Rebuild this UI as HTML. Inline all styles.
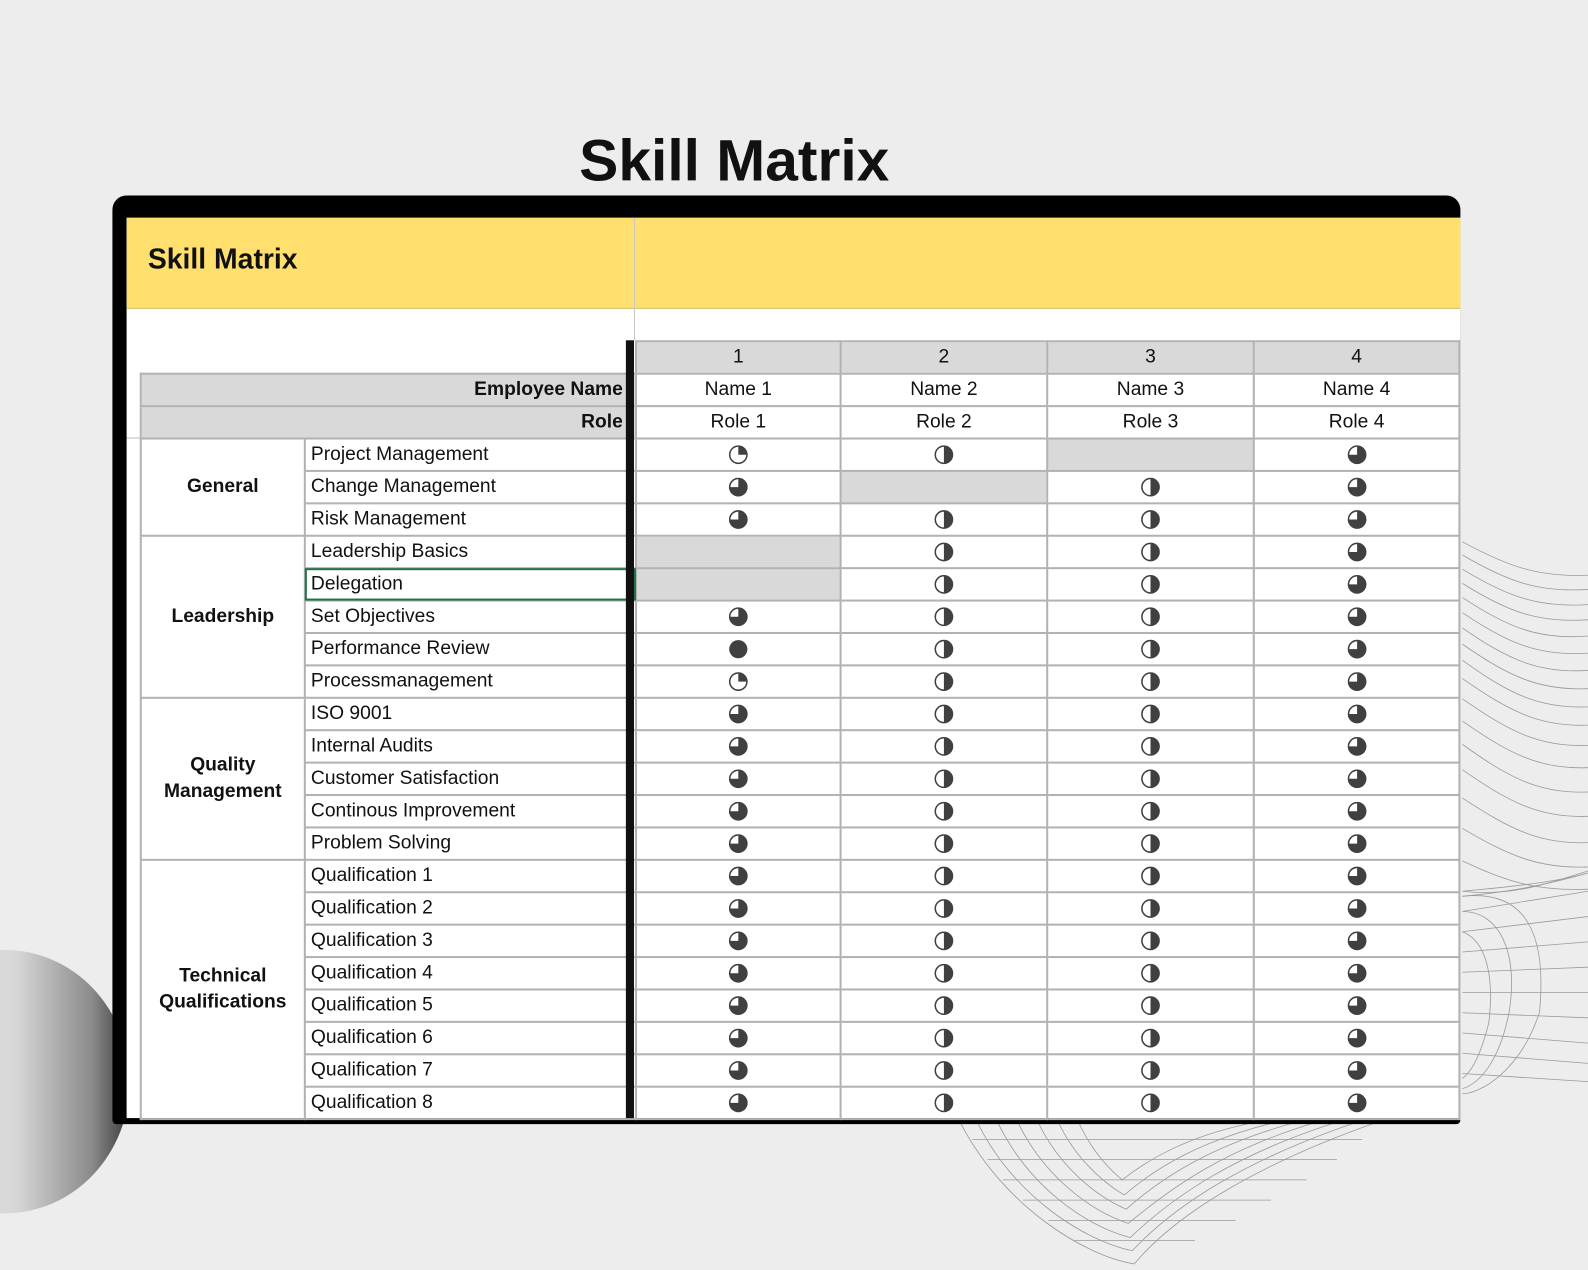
<!DOCTYPE html>
<html><head><meta charset="utf-8">
<style>
html,body{margin:0;padding:0;background:#ededed;overflow:hidden;}
body{width:1588px;height:1270px;position:relative;}
#w{position:absolute;left:0;top:0;width:1568px;height:1254px;transform:scale(1.01276);transform-origin:0 0;font-family:"Liberation Sans",Arial,sans-serif;}
.abs{position:absolute;}
#title{left:0;width:1450px;text-align:center;top:124px;font-size:58px;font-weight:bold;color:#111;line-height:70px;}
#panel{left:111px;top:193px;width:1331px;height:917px;background:#000;border-radius:14px 14px 4px 4px;}
#inner{left:125px;top:215px;width:1317px;height:889px;background:#fff;}
#yellow{left:125px;top:215px;width:1317px;height:89px;background:#ffe06e;border-bottom:1px solid #d8c070;}
#ytxt{left:146px;top:240px;font-size:28px;font-weight:bold;color:#111;}
#vline{left:626px;top:215px;width:1px;height:121px;background:#c8c8c8;}
table{position:absolute;left:138px;top:336px;border-collapse:collapse;table-layout:fixed;}
td{border:2px solid #b2b2b2;height:30px;padding:0;font-size:19px;color:#111;white-space:nowrap;overflow:hidden;text-align:center;vertical-align:middle;}
td.s{text-align:left;padding-left:5px;}
td.c{font-weight:bold;font-size:19px;line-height:26px;}
td.g{background:#d9d9d9;}
td.h{background:#d9d9d9;font-weight:bold;text-align:right;padding-right:12px;}
td.n{border:none;background:transparent;}
td.sel{outline:2px solid #217346;outline-offset:-2px;}
svg.i{display:block;margin:0 auto;}
#bar{left:618px;top:336px;width:8px;height:768px;background:#111;}
#hl{left:125px;top:432px;width:13px;height:1px;background:#bbb;}
</style></head><body><div id="w">
<svg class="abs" style="left:0;top:0" width="1568" height="1254">
<defs><linearGradient id="gr" x1="0" x2="1" y1="0" y2="0"><stop offset="0" stop-color="#ededed"/><stop offset="0.55" stop-color="#d6d6d6"/><stop offset="0.85" stop-color="#8a8a8a"/><stop offset="1" stop-color="#3a3a3a"/></linearGradient></defs>
<ellipse cx="5" cy="1068" rx="123" ry="130" fill="url(#gr)"/>
<g fill="none" stroke="#9a9a9a" stroke-width="0.8">
<path d="M1444 535 C1490 560 1520 570 1568 568"/>
<path d="M1444 548 C1490 575 1520 585 1568 582"/>
<path d="M1444 562 C1490 590 1520 600 1568 597"/>
<path d="M1444 576 C1490 605 1520 615 1568 612"/>
<path d="M1444 590 C1490 620 1520 632 1568 628"/>
<path d="M1444 605 C1490 636 1520 648 1568 645"/>
<path d="M1444 620 C1490 652 1520 665 1568 662"/>
<path d="M1444 636 C1490 668 1520 682 1568 680"/>
<path d="M1444 652 C1490 685 1520 700 1568 698"/>
<path d="M1444 670 C1490 702 1520 718 1568 716"/>
<path d="M1444 690 C1490 722 1520 738 1568 736"/>
<path d="M1444 712 C1490 744 1520 760 1568 758"/>
<path d="M1444 735 C1490 768 1520 784 1568 782"/>
<path d="M1444 760 C1490 792 1520 808 1568 806"/>
<path d="M1444 788 C1490 818 1520 834 1568 832"/>
<path d="M1444 818 C1490 845 1520 858 1568 856"/>
<path d="M1444 850 C1490 872 1520 880 1568 878"/>
<path d="M1444 880 C1490 885 1520 875 1568 860"/>
<path d="M1444 885 C1500 880 1540 870 1568 862"/>
<path d="M1444 880 C1500 875 1540 870 1568 862"/>
<path d="M1444 885 C1490 880 1530 900 1520 1000 1500 1060 1460 1080 1444 1080"/>
<path d="M1444 900 C1480 900 1500 940 1490 1000 1480 1050 1460 1070 1444 1075"/>
<path d="M1444 920 C1470 930 1475 970 1470 1010 1460 1050 1450 1060 1444 1065"/>
<path d="M1444 900 L1568 880 M1444 920 L1568 905 M1444 940 L1568 930 M1444 960 L1568 955 M1444 980 L1568 980 M1444 1000 L1568 1005 M1444 1020 L1568 1030 M1444 1040 L1568 1050 M1444 1060 L1568 1068"/>
<path d="M948 1108 C990 1190 1070 1240 1120 1248 C1160 1200 1240 1150 1360 1108"/>
<path d="M965 1108 C1000 1180 1070 1225 1118 1235 C1160 1190 1230 1145 1340 1108"/>
<path d="M985 1108 C1015 1170 1070 1210 1116 1222 C1160 1180 1220 1140 1320 1108"/>
<path d="M1005 1108 C1030 1160 1075 1195 1114 1208 C1160 1170 1210 1135 1300 1108"/>
<path d="M1025 1108 C1045 1150 1080 1180 1112 1194 C1150 1160 1200 1130 1280 1108"/>
<path d="M1045 1108 C1060 1140 1085 1165 1110 1180 C1145 1150 1190 1125 1260 1108"/>
<path d="M1065 1108 C1075 1130 1090 1150 1108 1165 C1140 1140 1180 1120 1240 1108"/>
<path d="M960 1125 L1345 1125 M975 1145 L1320 1145 M990 1165 L1290 1165 M1010 1185 L1255 1185 M1035 1205 L1220 1205 M1060 1225 L1180 1225"/>
</g>
</svg>
<div id="title" class="abs">Skill Matrix</div>
<div id="panel" class="abs"></div>
<div id="inner" class="abs"></div>
<div id="yellow" class="abs"></div>
<div id="ytxt" class="abs">Skill Matrix</div>
<div id="vline" class="abs"></div>
<div id="hl" class="abs"></div>
<table>
<colgroup><col style="width:162px"><col style="width:327px"><col style="width:202px"><col style="width:204px"><col style="width:204px"><col style="width:203px"></colgroup>
<tr><td class="n" colspan="2"></td><td class="g">1</td><td class="g">2</td><td class="g">3</td><td class="g">4</td></tr>
<tr><td class="h" colspan="2">Employee Name</td><td>Name 1</td><td>Name 2</td><td>Name 3</td><td>Name 4</td></tr>
<tr><td class="h" colspan="2">Role</td><td>Role 1</td><td>Role 2</td><td>Role 3</td><td>Role 4</td></tr>
<tr><td class="c" rowspan="3">General</td><td class="s">Project Management</td>
<td><svg class="i" width="20" height="20"><circle cx="10" cy="10" r="8.5" fill="#fff" stroke="#404040" stroke-width="1.5"/><path d="M10 10V1.5A8.5 8.5 0 0 1 18.5 10Z" fill="#404040"/></svg></td>
<td><svg class="i" width="20" height="20"><circle cx="10" cy="10" r="8.5" fill="#fff" stroke="#404040" stroke-width="1.5"/><path d="M10 1.5A8.5 8.5 0 0 1 10 18.5Z" fill="#404040"/></svg></td>
<td class="g"></td>
<td><svg class="i" width="20" height="20"><circle cx="10" cy="10" r="8.5" fill="#fff" stroke="#404040" stroke-width="1.5"/><path d="M10 10V1.5A8.5 8.5 0 1 1 1.5 10Z" fill="#404040"/></svg></td></tr>
<tr><td class="s">Change Management</td>
<td><svg class="i" width="20" height="20"><circle cx="10" cy="10" r="8.5" fill="#fff" stroke="#404040" stroke-width="1.5"/><path d="M10 10V1.5A8.5 8.5 0 1 1 1.5 10Z" fill="#404040"/></svg></td>
<td class="g"></td>
<td><svg class="i" width="20" height="20"><circle cx="10" cy="10" r="8.5" fill="#fff" stroke="#404040" stroke-width="1.5"/><path d="M10 1.5A8.5 8.5 0 0 1 10 18.5Z" fill="#404040"/></svg></td>
<td><svg class="i" width="20" height="20"><circle cx="10" cy="10" r="8.5" fill="#fff" stroke="#404040" stroke-width="1.5"/><path d="M10 10V1.5A8.5 8.5 0 1 1 1.5 10Z" fill="#404040"/></svg></td></tr>
<tr><td class="s">Risk Management</td>
<td><svg class="i" width="20" height="20"><circle cx="10" cy="10" r="8.5" fill="#fff" stroke="#404040" stroke-width="1.5"/><path d="M10 10V1.5A8.5 8.5 0 1 1 1.5 10Z" fill="#404040"/></svg></td>
<td><svg class="i" width="20" height="20"><circle cx="10" cy="10" r="8.5" fill="#fff" stroke="#404040" stroke-width="1.5"/><path d="M10 1.5A8.5 8.5 0 0 1 10 18.5Z" fill="#404040"/></svg></td>
<td><svg class="i" width="20" height="20"><circle cx="10" cy="10" r="8.5" fill="#fff" stroke="#404040" stroke-width="1.5"/><path d="M10 1.5A8.5 8.5 0 0 1 10 18.5Z" fill="#404040"/></svg></td>
<td><svg class="i" width="20" height="20"><circle cx="10" cy="10" r="8.5" fill="#fff" stroke="#404040" stroke-width="1.5"/><path d="M10 10V1.5A8.5 8.5 0 1 1 1.5 10Z" fill="#404040"/></svg></td></tr>
<tr><td class="c" rowspan="5">Leadership</td><td class="s">Leadership Basics</td>
<td class="g"></td>
<td><svg class="i" width="20" height="20"><circle cx="10" cy="10" r="8.5" fill="#fff" stroke="#404040" stroke-width="1.5"/><path d="M10 1.5A8.5 8.5 0 0 1 10 18.5Z" fill="#404040"/></svg></td>
<td><svg class="i" width="20" height="20"><circle cx="10" cy="10" r="8.5" fill="#fff" stroke="#404040" stroke-width="1.5"/><path d="M10 1.5A8.5 8.5 0 0 1 10 18.5Z" fill="#404040"/></svg></td>
<td><svg class="i" width="20" height="20"><circle cx="10" cy="10" r="8.5" fill="#fff" stroke="#404040" stroke-width="1.5"/><path d="M10 10V1.5A8.5 8.5 0 1 1 1.5 10Z" fill="#404040"/></svg></td></tr>
<tr><td class="s sel">Delegation</td>
<td class="g"></td>
<td><svg class="i" width="20" height="20"><circle cx="10" cy="10" r="8.5" fill="#fff" stroke="#404040" stroke-width="1.5"/><path d="M10 1.5A8.5 8.5 0 0 1 10 18.5Z" fill="#404040"/></svg></td>
<td><svg class="i" width="20" height="20"><circle cx="10" cy="10" r="8.5" fill="#fff" stroke="#404040" stroke-width="1.5"/><path d="M10 1.5A8.5 8.5 0 0 1 10 18.5Z" fill="#404040"/></svg></td>
<td><svg class="i" width="20" height="20"><circle cx="10" cy="10" r="8.5" fill="#fff" stroke="#404040" stroke-width="1.5"/><path d="M10 10V1.5A8.5 8.5 0 1 1 1.5 10Z" fill="#404040"/></svg></td></tr>
<tr><td class="s">Set Objectives</td>
<td><svg class="i" width="20" height="20"><circle cx="10" cy="10" r="8.5" fill="#fff" stroke="#404040" stroke-width="1.5"/><path d="M10 10V1.5A8.5 8.5 0 1 1 1.5 10Z" fill="#404040"/></svg></td>
<td><svg class="i" width="20" height="20"><circle cx="10" cy="10" r="8.5" fill="#fff" stroke="#404040" stroke-width="1.5"/><path d="M10 1.5A8.5 8.5 0 0 1 10 18.5Z" fill="#404040"/></svg></td>
<td><svg class="i" width="20" height="20"><circle cx="10" cy="10" r="8.5" fill="#fff" stroke="#404040" stroke-width="1.5"/><path d="M10 1.5A8.5 8.5 0 0 1 10 18.5Z" fill="#404040"/></svg></td>
<td><svg class="i" width="20" height="20"><circle cx="10" cy="10" r="8.5" fill="#fff" stroke="#404040" stroke-width="1.5"/><path d="M10 10V1.5A8.5 8.5 0 1 1 1.5 10Z" fill="#404040"/></svg></td></tr>
<tr><td class="s">Performance Review</td>
<td><svg class="i" width="20" height="20"><circle cx="10" cy="10" r="9" fill="#404040"/></svg></td>
<td><svg class="i" width="20" height="20"><circle cx="10" cy="10" r="8.5" fill="#fff" stroke="#404040" stroke-width="1.5"/><path d="M10 1.5A8.5 8.5 0 0 1 10 18.5Z" fill="#404040"/></svg></td>
<td><svg class="i" width="20" height="20"><circle cx="10" cy="10" r="8.5" fill="#fff" stroke="#404040" stroke-width="1.5"/><path d="M10 1.5A8.5 8.5 0 0 1 10 18.5Z" fill="#404040"/></svg></td>
<td><svg class="i" width="20" height="20"><circle cx="10" cy="10" r="8.5" fill="#fff" stroke="#404040" stroke-width="1.5"/><path d="M10 10V1.5A8.5 8.5 0 1 1 1.5 10Z" fill="#404040"/></svg></td></tr>
<tr><td class="s">Processmanagement</td>
<td><svg class="i" width="20" height="20"><circle cx="10" cy="10" r="8.5" fill="#fff" stroke="#404040" stroke-width="1.5"/><path d="M10 10V1.5A8.5 8.5 0 0 1 18.5 10Z" fill="#404040"/></svg></td>
<td><svg class="i" width="20" height="20"><circle cx="10" cy="10" r="8.5" fill="#fff" stroke="#404040" stroke-width="1.5"/><path d="M10 1.5A8.5 8.5 0 0 1 10 18.5Z" fill="#404040"/></svg></td>
<td><svg class="i" width="20" height="20"><circle cx="10" cy="10" r="8.5" fill="#fff" stroke="#404040" stroke-width="1.5"/><path d="M10 1.5A8.5 8.5 0 0 1 10 18.5Z" fill="#404040"/></svg></td>
<td><svg class="i" width="20" height="20"><circle cx="10" cy="10" r="8.5" fill="#fff" stroke="#404040" stroke-width="1.5"/><path d="M10 10V1.5A8.5 8.5 0 1 1 1.5 10Z" fill="#404040"/></svg></td></tr>
<tr><td class="c" rowspan="5">Quality<br>Management</td><td class="s">ISO 9001</td>
<td><svg class="i" width="20" height="20"><circle cx="10" cy="10" r="8.5" fill="#fff" stroke="#404040" stroke-width="1.5"/><path d="M10 10V1.5A8.5 8.5 0 1 1 1.5 10Z" fill="#404040"/></svg></td>
<td><svg class="i" width="20" height="20"><circle cx="10" cy="10" r="8.5" fill="#fff" stroke="#404040" stroke-width="1.5"/><path d="M10 1.5A8.5 8.5 0 0 1 10 18.5Z" fill="#404040"/></svg></td>
<td><svg class="i" width="20" height="20"><circle cx="10" cy="10" r="8.5" fill="#fff" stroke="#404040" stroke-width="1.5"/><path d="M10 1.5A8.5 8.5 0 0 1 10 18.5Z" fill="#404040"/></svg></td>
<td><svg class="i" width="20" height="20"><circle cx="10" cy="10" r="8.5" fill="#fff" stroke="#404040" stroke-width="1.5"/><path d="M10 10V1.5A8.5 8.5 0 1 1 1.5 10Z" fill="#404040"/></svg></td></tr>
<tr><td class="s">Internal Audits</td>
<td><svg class="i" width="20" height="20"><circle cx="10" cy="10" r="8.5" fill="#fff" stroke="#404040" stroke-width="1.5"/><path d="M10 10V1.5A8.5 8.5 0 1 1 1.5 10Z" fill="#404040"/></svg></td>
<td><svg class="i" width="20" height="20"><circle cx="10" cy="10" r="8.5" fill="#fff" stroke="#404040" stroke-width="1.5"/><path d="M10 1.5A8.5 8.5 0 0 1 10 18.5Z" fill="#404040"/></svg></td>
<td><svg class="i" width="20" height="20"><circle cx="10" cy="10" r="8.5" fill="#fff" stroke="#404040" stroke-width="1.5"/><path d="M10 1.5A8.5 8.5 0 0 1 10 18.5Z" fill="#404040"/></svg></td>
<td><svg class="i" width="20" height="20"><circle cx="10" cy="10" r="8.5" fill="#fff" stroke="#404040" stroke-width="1.5"/><path d="M10 10V1.5A8.5 8.5 0 1 1 1.5 10Z" fill="#404040"/></svg></td></tr>
<tr><td class="s">Customer Satisfaction</td>
<td><svg class="i" width="20" height="20"><circle cx="10" cy="10" r="8.5" fill="#fff" stroke="#404040" stroke-width="1.5"/><path d="M10 10V1.5A8.5 8.5 0 1 1 1.5 10Z" fill="#404040"/></svg></td>
<td><svg class="i" width="20" height="20"><circle cx="10" cy="10" r="8.5" fill="#fff" stroke="#404040" stroke-width="1.5"/><path d="M10 1.5A8.5 8.5 0 0 1 10 18.5Z" fill="#404040"/></svg></td>
<td><svg class="i" width="20" height="20"><circle cx="10" cy="10" r="8.5" fill="#fff" stroke="#404040" stroke-width="1.5"/><path d="M10 1.5A8.5 8.5 0 0 1 10 18.5Z" fill="#404040"/></svg></td>
<td><svg class="i" width="20" height="20"><circle cx="10" cy="10" r="8.5" fill="#fff" stroke="#404040" stroke-width="1.5"/><path d="M10 10V1.5A8.5 8.5 0 1 1 1.5 10Z" fill="#404040"/></svg></td></tr>
<tr><td class="s">Continous Improvement</td>
<td><svg class="i" width="20" height="20"><circle cx="10" cy="10" r="8.5" fill="#fff" stroke="#404040" stroke-width="1.5"/><path d="M10 10V1.5A8.5 8.5 0 1 1 1.5 10Z" fill="#404040"/></svg></td>
<td><svg class="i" width="20" height="20"><circle cx="10" cy="10" r="8.5" fill="#fff" stroke="#404040" stroke-width="1.5"/><path d="M10 1.5A8.5 8.5 0 0 1 10 18.5Z" fill="#404040"/></svg></td>
<td><svg class="i" width="20" height="20"><circle cx="10" cy="10" r="8.5" fill="#fff" stroke="#404040" stroke-width="1.5"/><path d="M10 1.5A8.5 8.5 0 0 1 10 18.5Z" fill="#404040"/></svg></td>
<td><svg class="i" width="20" height="20"><circle cx="10" cy="10" r="8.5" fill="#fff" stroke="#404040" stroke-width="1.5"/><path d="M10 10V1.5A8.5 8.5 0 1 1 1.5 10Z" fill="#404040"/></svg></td></tr>
<tr><td class="s">Problem Solving</td>
<td><svg class="i" width="20" height="20"><circle cx="10" cy="10" r="8.5" fill="#fff" stroke="#404040" stroke-width="1.5"/><path d="M10 10V1.5A8.5 8.5 0 1 1 1.5 10Z" fill="#404040"/></svg></td>
<td><svg class="i" width="20" height="20"><circle cx="10" cy="10" r="8.5" fill="#fff" stroke="#404040" stroke-width="1.5"/><path d="M10 1.5A8.5 8.5 0 0 1 10 18.5Z" fill="#404040"/></svg></td>
<td><svg class="i" width="20" height="20"><circle cx="10" cy="10" r="8.5" fill="#fff" stroke="#404040" stroke-width="1.5"/><path d="M10 1.5A8.5 8.5 0 0 1 10 18.5Z" fill="#404040"/></svg></td>
<td><svg class="i" width="20" height="20"><circle cx="10" cy="10" r="8.5" fill="#fff" stroke="#404040" stroke-width="1.5"/><path d="M10 10V1.5A8.5 8.5 0 1 1 1.5 10Z" fill="#404040"/></svg></td></tr>
<tr><td class="c" rowspan="8">Technical<br>Qualifications</td><td class="s">Qualification 1</td>
<td><svg class="i" width="20" height="20"><circle cx="10" cy="10" r="8.5" fill="#fff" stroke="#404040" stroke-width="1.5"/><path d="M10 10V1.5A8.5 8.5 0 1 1 1.5 10Z" fill="#404040"/></svg></td>
<td><svg class="i" width="20" height="20"><circle cx="10" cy="10" r="8.5" fill="#fff" stroke="#404040" stroke-width="1.5"/><path d="M10 1.5A8.5 8.5 0 0 1 10 18.5Z" fill="#404040"/></svg></td>
<td><svg class="i" width="20" height="20"><circle cx="10" cy="10" r="8.5" fill="#fff" stroke="#404040" stroke-width="1.5"/><path d="M10 1.5A8.5 8.5 0 0 1 10 18.5Z" fill="#404040"/></svg></td>
<td><svg class="i" width="20" height="20"><circle cx="10" cy="10" r="8.5" fill="#fff" stroke="#404040" stroke-width="1.5"/><path d="M10 10V1.5A8.5 8.5 0 1 1 1.5 10Z" fill="#404040"/></svg></td></tr>
<tr><td class="s">Qualification 2</td>
<td><svg class="i" width="20" height="20"><circle cx="10" cy="10" r="8.5" fill="#fff" stroke="#404040" stroke-width="1.5"/><path d="M10 10V1.5A8.5 8.5 0 1 1 1.5 10Z" fill="#404040"/></svg></td>
<td><svg class="i" width="20" height="20"><circle cx="10" cy="10" r="8.5" fill="#fff" stroke="#404040" stroke-width="1.5"/><path d="M10 1.5A8.5 8.5 0 0 1 10 18.5Z" fill="#404040"/></svg></td>
<td><svg class="i" width="20" height="20"><circle cx="10" cy="10" r="8.5" fill="#fff" stroke="#404040" stroke-width="1.5"/><path d="M10 1.5A8.5 8.5 0 0 1 10 18.5Z" fill="#404040"/></svg></td>
<td><svg class="i" width="20" height="20"><circle cx="10" cy="10" r="8.5" fill="#fff" stroke="#404040" stroke-width="1.5"/><path d="M10 10V1.5A8.5 8.5 0 1 1 1.5 10Z" fill="#404040"/></svg></td></tr>
<tr><td class="s">Qualification 3</td>
<td><svg class="i" width="20" height="20"><circle cx="10" cy="10" r="8.5" fill="#fff" stroke="#404040" stroke-width="1.5"/><path d="M10 10V1.5A8.5 8.5 0 1 1 1.5 10Z" fill="#404040"/></svg></td>
<td><svg class="i" width="20" height="20"><circle cx="10" cy="10" r="8.5" fill="#fff" stroke="#404040" stroke-width="1.5"/><path d="M10 1.5A8.5 8.5 0 0 1 10 18.5Z" fill="#404040"/></svg></td>
<td><svg class="i" width="20" height="20"><circle cx="10" cy="10" r="8.5" fill="#fff" stroke="#404040" stroke-width="1.5"/><path d="M10 1.5A8.5 8.5 0 0 1 10 18.5Z" fill="#404040"/></svg></td>
<td><svg class="i" width="20" height="20"><circle cx="10" cy="10" r="8.5" fill="#fff" stroke="#404040" stroke-width="1.5"/><path d="M10 10V1.5A8.5 8.5 0 1 1 1.5 10Z" fill="#404040"/></svg></td></tr>
<tr><td class="s">Qualification 4</td>
<td><svg class="i" width="20" height="20"><circle cx="10" cy="10" r="8.5" fill="#fff" stroke="#404040" stroke-width="1.5"/><path d="M10 10V1.5A8.5 8.5 0 1 1 1.5 10Z" fill="#404040"/></svg></td>
<td><svg class="i" width="20" height="20"><circle cx="10" cy="10" r="8.5" fill="#fff" stroke="#404040" stroke-width="1.5"/><path d="M10 1.5A8.5 8.5 0 0 1 10 18.5Z" fill="#404040"/></svg></td>
<td><svg class="i" width="20" height="20"><circle cx="10" cy="10" r="8.5" fill="#fff" stroke="#404040" stroke-width="1.5"/><path d="M10 1.5A8.5 8.5 0 0 1 10 18.5Z" fill="#404040"/></svg></td>
<td><svg class="i" width="20" height="20"><circle cx="10" cy="10" r="8.5" fill="#fff" stroke="#404040" stroke-width="1.5"/><path d="M10 10V1.5A8.5 8.5 0 1 1 1.5 10Z" fill="#404040"/></svg></td></tr>
<tr><td class="s">Qualification 5</td>
<td><svg class="i" width="20" height="20"><circle cx="10" cy="10" r="8.5" fill="#fff" stroke="#404040" stroke-width="1.5"/><path d="M10 10V1.5A8.5 8.5 0 1 1 1.5 10Z" fill="#404040"/></svg></td>
<td><svg class="i" width="20" height="20"><circle cx="10" cy="10" r="8.5" fill="#fff" stroke="#404040" stroke-width="1.5"/><path d="M10 1.5A8.5 8.5 0 0 1 10 18.5Z" fill="#404040"/></svg></td>
<td><svg class="i" width="20" height="20"><circle cx="10" cy="10" r="8.5" fill="#fff" stroke="#404040" stroke-width="1.5"/><path d="M10 1.5A8.5 8.5 0 0 1 10 18.5Z" fill="#404040"/></svg></td>
<td><svg class="i" width="20" height="20"><circle cx="10" cy="10" r="8.5" fill="#fff" stroke="#404040" stroke-width="1.5"/><path d="M10 10V1.5A8.5 8.5 0 1 1 1.5 10Z" fill="#404040"/></svg></td></tr>
<tr><td class="s">Qualification 6</td>
<td><svg class="i" width="20" height="20"><circle cx="10" cy="10" r="8.5" fill="#fff" stroke="#404040" stroke-width="1.5"/><path d="M10 10V1.5A8.5 8.5 0 1 1 1.5 10Z" fill="#404040"/></svg></td>
<td><svg class="i" width="20" height="20"><circle cx="10" cy="10" r="8.5" fill="#fff" stroke="#404040" stroke-width="1.5"/><path d="M10 1.5A8.5 8.5 0 0 1 10 18.5Z" fill="#404040"/></svg></td>
<td><svg class="i" width="20" height="20"><circle cx="10" cy="10" r="8.5" fill="#fff" stroke="#404040" stroke-width="1.5"/><path d="M10 1.5A8.5 8.5 0 0 1 10 18.5Z" fill="#404040"/></svg></td>
<td><svg class="i" width="20" height="20"><circle cx="10" cy="10" r="8.5" fill="#fff" stroke="#404040" stroke-width="1.5"/><path d="M10 10V1.5A8.5 8.5 0 1 1 1.5 10Z" fill="#404040"/></svg></td></tr>
<tr><td class="s">Qualification 7</td>
<td><svg class="i" width="20" height="20"><circle cx="10" cy="10" r="8.5" fill="#fff" stroke="#404040" stroke-width="1.5"/><path d="M10 10V1.5A8.5 8.5 0 1 1 1.5 10Z" fill="#404040"/></svg></td>
<td><svg class="i" width="20" height="20"><circle cx="10" cy="10" r="8.5" fill="#fff" stroke="#404040" stroke-width="1.5"/><path d="M10 1.5A8.5 8.5 0 0 1 10 18.5Z" fill="#404040"/></svg></td>
<td><svg class="i" width="20" height="20"><circle cx="10" cy="10" r="8.5" fill="#fff" stroke="#404040" stroke-width="1.5"/><path d="M10 1.5A8.5 8.5 0 0 1 10 18.5Z" fill="#404040"/></svg></td>
<td><svg class="i" width="20" height="20"><circle cx="10" cy="10" r="8.5" fill="#fff" stroke="#404040" stroke-width="1.5"/><path d="M10 10V1.5A8.5 8.5 0 1 1 1.5 10Z" fill="#404040"/></svg></td></tr>
<tr><td class="s">Qualification 8</td>
<td><svg class="i" width="20" height="20"><circle cx="10" cy="10" r="8.5" fill="#fff" stroke="#404040" stroke-width="1.5"/><path d="M10 10V1.5A8.5 8.5 0 1 1 1.5 10Z" fill="#404040"/></svg></td>
<td><svg class="i" width="20" height="20"><circle cx="10" cy="10" r="8.5" fill="#fff" stroke="#404040" stroke-width="1.5"/><path d="M10 1.5A8.5 8.5 0 0 1 10 18.5Z" fill="#404040"/></svg></td>
<td><svg class="i" width="20" height="20"><circle cx="10" cy="10" r="8.5" fill="#fff" stroke="#404040" stroke-width="1.5"/><path d="M10 1.5A8.5 8.5 0 0 1 10 18.5Z" fill="#404040"/></svg></td>
<td><svg class="i" width="20" height="20"><circle cx="10" cy="10" r="8.5" fill="#fff" stroke="#404040" stroke-width="1.5"/><path d="M10 10V1.5A8.5 8.5 0 1 1 1.5 10Z" fill="#404040"/></svg></td></tr>
</table>
<div id="bar" class="abs"></div>
</div></body></html>
